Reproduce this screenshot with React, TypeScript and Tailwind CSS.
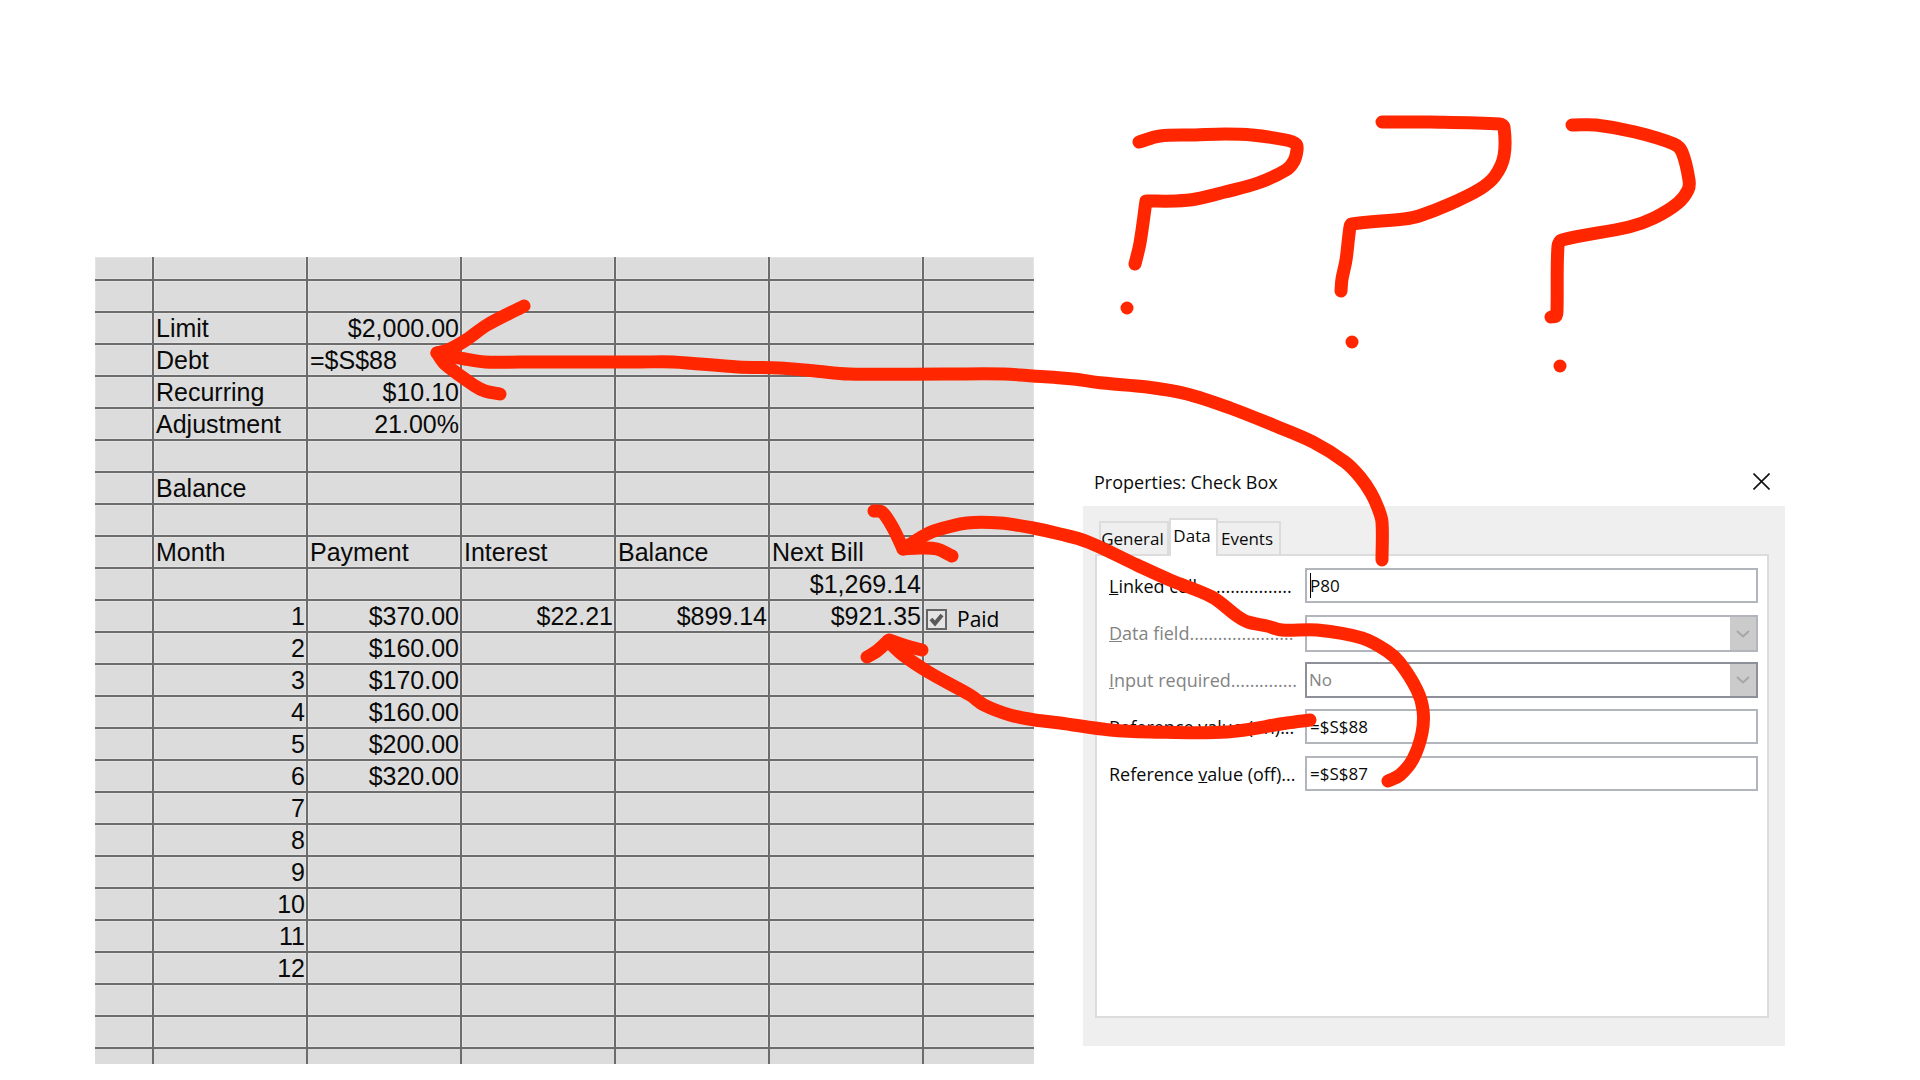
import { ReactNode } from "react";

type Point = [number, number];

const labels: Record<number, [string, string]> = {
  2: ["Limit", "$2,000.00"],
  3: ["Debt", "=$S$88"],
  4: ["Recurring", "$10.10"],
  5: ["Adjustment", "21.00%"],
  7: ["Balance", ""],
};

const payments = ["$370.00", "$160.00", "$170.00", "$160.00", "$200.00", "$320.00"];

// Every inner array is one pen stroke, a repeated point makes a hard corner
const strokes: Point[][] = [
  // linked cell -> debt
  [
    [1382, 560], [1382, 522], [1378, 508], [1371, 493], [1360, 477], [1345, 462], [1313, 442],
    [1273, 425], [1230, 408], [1187, 394], [1147, 387], [1103, 383], [1073, 379], [1033, 376],
    [1004, 374], [945, 374], [849, 374], [815, 371], [779, 368], [738, 367], [673, 362], [640, 362], [520, 362],
    [485, 362], [465, 359], [437, 353],
  ],
  [[524, 306], [487, 325], [466, 340], [448, 350], [437, 353], [437, 353], [445, 364], [475, 386], [485, 391], [500, 394]],
  // reference value (off) -> next bill
  [
    [1388, 781], [1400, 775], [1413, 759], [1422, 733], [1423, 710], [1417, 690], [1400, 663],
    [1387, 651], [1362, 638], [1317, 630], [1282, 630], [1267, 626], [1248, 622], [1237, 616],
    [1212, 597], [1170, 580], [1137, 565], [1088, 542], [1060, 534], [1033, 528], [1000, 523],
    [967, 523], [934, 531], [920, 538], [903, 549],
  ],
  [[874, 511], [882, 512], [893, 528], [903, 549], [903, 549], [920, 548], [937, 549], [952, 556]],
  // reference value (on) -> paid bill
  [
    [1310, 720], [1287, 723], [1227, 732], [1150, 732], [1110, 730], [1060, 723], [1035, 720],
    [1010, 715], [984, 705], [970, 695], [930, 673], [903, 655], [888, 641],
  ],
  [[867, 657], [877, 651], [889, 640], [889, 640], [910, 647], [922, 650]],
  // question marks
  [
    [1139, 142], [1160, 136], [1195, 135], [1225, 134], [1252, 135], [1286, 140], [1296, 144],
    [1297, 150], [1294, 161], [1286, 170], [1258, 183], [1225, 192], [1196, 199], [1176, 201], [1146, 201],
    [1146, 201], [1140, 243], [1135, 264],
  ],
  [[1127, 308], [1127, 308]],
  [
    [1382, 122], [1430, 122], [1500, 124], [1504, 127], [1504, 156], [1495, 176], [1480, 189],
    [1450, 204], [1419, 216], [1404, 219], [1352, 224], [1350, 227], [1346, 260], [1342, 279], [1341, 291],
  ],
  [[1352, 342], [1352, 342]],
  [
    [1572, 125], [1596, 125], [1635, 132], [1674, 144], [1682, 152], [1689, 180], [1688, 190],
    [1678, 203], [1654, 218], [1629, 227], [1562, 240], [1558, 246], [1557, 310], [1556, 316], [1551, 317],
  ],
  [[1560, 366], [1560, 366]],
];

function toPath(points: Point[]) {
  let d = `M${points[0][0]} ${points[0][1]}`;
  for (let i = 0; i < points.length - 1; i++) {
    const p0 = points[i - 1] ?? points[i];
    const p1 = points[i];
    const p2 = points[i + 1];
    const p3 = points[i + 2] ?? p2;
    // keep the handles shorter than the segment so short ones don't loop
    const len = Math.hypot(p2[0] - p1[0], p2[1] - p1[1]);
    const ka = len / (len + Math.hypot(p1[0] - p0[0], p1[1] - p0[1]) || 1) / 3;
    const kb = len / (len + Math.hypot(p3[0] - p2[0], p3[1] - p2[1]) || 1) / 3;
    const ax = p1[0] + (p2[0] - p0[0]) * ka;
    const ay = p1[1] + (p2[1] - p0[1]) * ka;
    const bx = p2[0] - (p3[0] - p1[0]) * kb;
    const by = p2[1] - (p3[1] - p1[1]) * kb;
    d += `C${ax} ${ay} ${bx} ${by} ${p2[0]} ${p2[1]}`;
  }
  return d;
}

function Scribbles() {
  return (
    <svg
      viewBox="0 0 1920 1080"
      className="pointer-events-none absolute left-0 top-0 w-full"
      fill="none"
      stroke="#ff2600"
      strokeWidth="13"
      strokeLinecap="round"
      strokeLinejoin="round"
      aria-hidden="true"
    >
      {strokes.map((points, i) => (
        <path key={i} d={toPath(points)} />
      ))}
    </svg>
  );
}

function Cell({ children, right }: { children?: ReactNode; right?: boolean }) {
  return (
    <td
      className={`overflow-hidden whitespace-nowrap border-b-2 border-r-2 border-[#6c6c6c] pl-[2px] pr-px pt-px pb-0 align-top shadow-[inset_0_0_0_1px_#e4e4e4] last:border-r-0 ${
        right ? "text-right" : "text-left"
      }`}
    >
      {children}
    </td>
  );
}

function PaidBox() {
  return (
    <label className="flex items-center gap-[10px] pt-[5px] font-['Open_Sans',sans-serif] text-[21px] leading-[24px] text-black">
      <span className="relative flex">
        <input
          type="checkbox"
          defaultChecked
          className="h-[21px] w-[21px] appearance-none border-2 border-[#666] bg-[#e4e4e4]"
        />
        <svg viewBox="0 0 21 21" className="pointer-events-none absolute inset-0" fill="none" stroke="#5a5a5a" strokeWidth="4">
          <path d="M5 10l4 4.500L16 6" />
        </svg>
      </span>
      Paid
    </label>
  );
}

function SheetRow({ index }: { index: number }) {
  const label = labels[index];
  if (label) {
    return (
      <>
        <Cell>{label[0]}</Cell>
        <Cell right={index !== 3}>{label[1]}</Cell>
        <Cell />
        <Cell />
        <Cell />
        <Cell />
      </>
    );
  }
  if (index === 9) {
    return (
      <>
        <Cell>Month</Cell>
        <Cell>Payment</Cell>
        <Cell>Interest</Cell>
        <Cell>Balance</Cell>
        <Cell>Next Bill</Cell>
        <Cell />
      </>
    );
  }
  const month = index - 10;
  const isMonth = month >= 1 && month <= 12;
  return (
    <>
      <Cell right>{isMonth && month}</Cell>
      <Cell right>{isMonth && payments[month - 1]}</Cell>
      <Cell right>{month === 1 && "$22.21"}</Cell>
      <Cell right>{month === 1 && "$899.14"}</Cell>
      <Cell right>
        {month === 0 && "$1,269.14"}
        {month === 1 && "$921.35"}
      </Cell>
      <Cell>{month === 1 && <PaidBox />}</Cell>
    </>
  );
}

function Sheet() {
  return (
    <div className="min-w-0 flex-[939] bg-[#dcdcdc]">
      <table className="w-full table-fixed border-separate border-spacing-0 font-['Liberation_Sans',Arial,sans-serif] text-[25px] leading-[29px] text-[#0a0a0a]">
        <colgroup>
          <col className="w-[59px]" />
          <col className="w-[154px]" />
          <col className="w-[154px]" />
          <col className="w-[154px]" />
          <col className="w-[154px]" />
          <col className="w-[154px]" />
          <col />
        </colgroup>
        <tbody>
          {Array.from({ length: 25 }, (_, i) => (
            <tr key={i} className={i === 0 ? "h-6" : "h-8"}>
              <Cell />
              <SheetRow index={i} />
            </tr>
          ))}
          <tr className="h-[15px]">
            {Array.from({ length: 7 }, (_, i) => (
              <td key={i} className="border-r-2 border-[#6c6c6c] p-0 last:border-r-0" />
            ))}
          </tr>
        </tbody>
      </table>
    </div>
  );
}

function Field({ id, label, children, disabled }: { id: string; label: ReactNode; children: ReactNode; disabled?: boolean }) {
  return (
    <div className="flex h-[47px] items-start">
      <label
        htmlFor={id}
        className={`w-[196px] shrink-0 whitespace-nowrap text-lg leading-[36px] ${disabled ? "text-[#838383]" : ""}`}
      >
        {label}
      </label>
      <div className="relative flex min-w-0 flex-1">{children}</div>
    </div>
  );
}

const inputClass = "h-[35px] w-full border-2 border-[#b3b5bc] bg-white px-[3px] outline-none";

function Select({ id, value, className }: { id: string; value: string; className: string }) {
  return (
    <>
      <select id={id} disabled className={`w-full appearance-none border-2 bg-white px-[2px] text-[#838383] opacity-100 ${className}`}>
        <option>{value}</option>
      </select>
      <span className="pointer-events-none absolute inset-y-[2px] right-[2px] flex w-[26px] items-center justify-center bg-[#cbcbcb]">
        <svg width="14" height="8" viewBox="0 0 14 8" fill="none" stroke="#a6a6a6" strokeWidth="2">
          <path d="M1 1l6 5.500L13 1" />
        </svg>
      </span>
    </>
  );
}

function Dialog() {
  return (
    <section className="mt-[200px] min-w-0 flex-[702] font-['Open_Sans',sans-serif] text-[17px] text-[#0a0a0a]">
      <header className="flex h-[49px] items-center justify-between pl-[11px] pr-[15px]">
        <h1 className="text-lg">Properties: Check Box</h1>
        <button type="button" aria-label="Close">
          <svg width="17" height="17" viewBox="0 0 17 17" stroke="#111" strokeWidth="1.600">
            <path d="M0.500 0.500l16 16M16.500 0.500l-16 16" />
          </svg>
        </button>
      </header>
      <div className="bg-[#efefef] pb-7 pl-3 pr-4 pt-3">
        <div className="flex items-end pl-1 leading-[30px]" role="tablist">
          <button type="button" role="tab" className="h-[33px] w-[70px] border-2 border-b-0 border-[#dcdcdc] pr-[3px]">
            General
          </button>
          <button
            type="button"
            role="tab"
            aria-selected="true"
            className="relative -mb-[2px] h-[38px] w-[49px] border-2 border-b-0 border-[#dcdcdc] bg-white pb-1 pr-[3px]"
          >
            Data
          </button>
          <button type="button" role="tab" className="h-[33px] w-[63px] border-2 border-b-0 border-l-0 border-[#dcdcdc] pr-[3px]">
            Events
          </button>
        </div>
        <div className="min-h-[464px] border-2 border-[#dcdcdc] bg-white pl-3 pr-[9px] pt-3">
          <Field id="linked" label={<><u>L</u>inked cell....................</>}>
            <input id="linked" defaultValue="P80" className={inputClass} />
            <span className="absolute left-[5px] top-[5px] h-[25px] w-px bg-black" />
          </Field>
          <Field id="field" disabled label={<><u>D</u>ata field......................</>}>
            <Select id="field" value="" className="h-[37px] border-[#b3b5bc]" />
          </Field>
          <Field id="required" disabled label={<><u>I</u>nput required..............</>}>
            <Select id="required" value="No" className="h-[36px] border-[#8e9099]" />
          </Field>
          <Field id="on" label={<><u>R</u>eference value (on)...</>}>
            <input id="on" defaultValue="=$S$88" className={inputClass} />
          </Field>
          <Field id="off" label={<>Reference <u>v</u>alue (off)...</>}>
            <input id="off" defaultValue="=$S$87" className={inputClass} />
          </Field>
        </div>
      </div>
    </section>
  );
}

function App() {
  return (
    <main className="relative flex min-h-screen items-start gap-[49px] bg-white pb-4 pl-[95px] pr-[135px] pt-[257px]">
      <Sheet />
      <Dialog />
      <Scribbles />
    </main>
  );
}

export default App;
